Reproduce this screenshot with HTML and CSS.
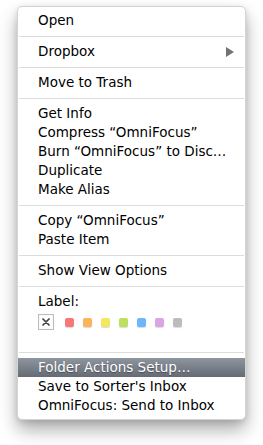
FILE: index.html
```html
<!DOCTYPE html>
<html lang="en">
<head>
  <meta charset="UTF-8" />
  <meta name="viewport" content="width=device-width, initial-scale=1.0"/>
  <link rel="stylesheet" href="styles.css">
</head>
<body>

  <!-- Finder context menu -->
  <div class="menu">
    <div class="item">Open</div>
    <div class="sep"></div>
    <div class="item has-sub">Dropbox <span class="arrow"></span></div>
    <div class="sep"></div>
    <div class="item">Move to Trash</div>
    <div class="sep"></div>
    <div class="item">Get Info</div>
    <div class="item">Compress “OmniFocus”</div>
    <div class="item">Burn “OmniFocus” to Disc…</div>
    <div class="item">Duplicate</div>
    <div class="item">Make Alias</div>
    <div class="sep"></div>
    <div class="item">Copy “OmniFocus”</div>
    <div class="item">Paste Item</div>
    <div class="sep"></div>
    <div class="item">Show View Options</div>
    <div class="sep"></div>

    <!-- Labels -->
    <div class="label-block">
      <div class="item">Label:</div>
      <div class="swatches">
        <span class="swatch-none">
          <svg width="8" height="8" viewBox="0 0 8 8">
            <path d="M1 1 L7 7 M7 1 L1 7" stroke="#404040" stroke-width="1.7" stroke-linecap="round"/>
          </svg>
        </span>
        <span class="swatch red"></span>
        <span class="swatch orange"></span>
        <span class="swatch yellow"></span>
        <span class="swatch green"></span>
        <span class="swatch blue"></span>
        <span class="swatch purple"></span>
        <span class="swatch gray"></span>
      </div>
    </div>

    <div class="sep"></div>
    <div class="item selected">Folder Actions Setup…</div>
    <div class="item">Save to Sorter's Inbox</div>
    <div class="item">OmniFocus: Send to Inbox</div>
  </div>

</body>
</html>
```

FILE: styles.css
```css
* {
  margin: 0;
  padding: 0;
  box-sizing: border-box;
}

html, body {
  height: 100%;
  background: #fff;
  font-family: 'DejaVu Sans', sans-serif;
  overflow: hidden;
}

body {
  padding: 6px 17px 0 17px;
}

.menu {
  width: 229px;
  background: #fff;
  border: 1px solid #d4d4d4;
  border-radius: 5px;
  padding: 4px 0 4px 0;
  box-shadow: 0 10px 18px rgba(0, 0, 0, 0.32), 0 2px 6px rgba(0, 0, 0, 0.12);
}

.item {
  height: 19px;
  line-height: 19px;
  padding-left: 20px;
  font-size: 13.5px;
  color: #000;
  white-space: nowrap;
}

.has-sub {
  display: flex;
  align-items: center;
  justify-content: space-between;
  padding-right: 11px;
}

.arrow {
  width: 0;
  height: 0;
  border-top: 5px solid transparent;
  border-bottom: 5px solid transparent;
  border-left: 8px solid #737373;
}

.sep {
  height: 12px;
  display: flex;
  align-items: center;
  padding: 0 1px;
}

.sep::after {
  content: "";
  flex: 1;
  height: 1px;
  background: #dcdcdc;
}

.selected {
  color: #fff;
  background: linear-gradient(#8e959f, #646b75);
  text-shadow: 0 1px 1px rgba(0, 0, 0, 0.35);
}

.label-block {
  height: 54px;
}

.swatches {
  display: flex;
  align-items: center;
  gap: 9px;
  padding-left: 20px;
  margin-top: 3px;
}

.swatch-none {
  width: 16px;
  height: 16px;
  border: 1px solid #bdbdbd;
  box-shadow: inset 0 0 1px rgba(0, 0, 0, 0.2);
  display: flex;
  align-items: center;
  justify-content: center;
  margin-right: 2px;
}

.swatch {
  width: 9px;
  height: 9px;
  border-radius: 2px;
  box-shadow: 0 1px 1px rgba(0, 0, 0, 0.15);
}

.red { background: #f87878; }
.orange { background: #fbb45c; }
.yellow { background: #f4e85e; }
.green { background: #bde05f; }
.blue { background: #6fb5f9; }
.purple { background: #d9a5e5; }
.gray { background: #bcbcbc; }
```
